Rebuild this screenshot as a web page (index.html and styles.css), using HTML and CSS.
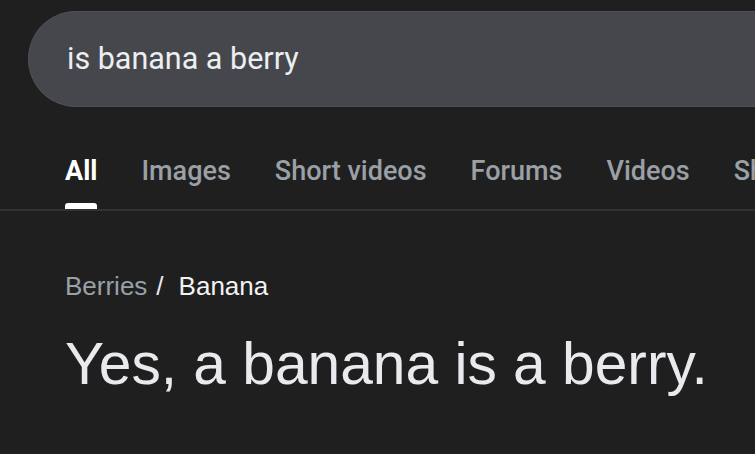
FILE: index.html
```html
<!DOCTYPE html>
<html lang="en">
<head>
<meta charset="utf-8">
<title>is banana a berry</title>
<link rel="stylesheet" href="styles.css">
</head>
<body>
<header class="top">
  <div class="search">
    <span class="query">is banana a berry</span>
  </div>
</header>
<nav class="tabs">
  <a class="tab active"><span class="label">All</span><span class="bar"></span></a>
  <a class="tab"><span class="label">Images</span><span class="bar"></span></a>
  <a class="tab"><span class="label">Short videos</span><span class="bar"></span></a>
  <a class="tab"><span class="label">Forums</span><span class="bar"></span></a>
  <a class="tab"><span class="label">Videos</span><span class="bar"></span></a>
  <a class="tab"><span class="label">Shopping</span><span class="bar"></span></a>
</nav>
<main class="content">
  <div class="crumbs"><span class="crumb-parent">Berries</span><span class="sep">/</span><span class="crumb-current">Banana</span></div>
  <h1 class="answer">Yes, a banana is a berry.</h1>
</main>
</body>
</html>
```
FILE: styles.css
```css
html, body {
  margin: 0;
  padding: 0;
  background: #1f1f1f;
  overflow: hidden;
  width: 755px;
  height: 454px;
}
.top {
  padding: 11px 0 0 28px;
}
.search {
  box-sizing: border-box;
  height: 96px;
  width: 800px;
  background: #45474c;
  border: 1px solid #505257;
  border-right: none;
  border-radius: 48px 0 0 48px;
  display: flex;
  align-items: center;
  padding-left: 38px;
}
.query {
  font-family: Roboto, "Liberation Sans", sans-serif;
  font-size: 30.5px;
  color: #eceef0;
  line-height: 36px;
}
.tabs {
  display: flex;
  gap: 44px;
  padding: 48px 0 0 65px;
  border-bottom: 2px solid #303134;
  white-space: nowrap;
  overflow: hidden;
}
.tab {
  display: flex;
  flex-direction: column;
  align-items: stretch;
  font-family: Roboto, "Liberation Sans", sans-serif;
  font-weight: 500;
  font-size: 27px;
  line-height: 32px;
  color: #9aa0a6;
  flex: none;
}
.tab .bar {
  height: 6px;
  margin-top: 16px;
  border-radius: 3px 3px 0 0;
  background: transparent;
}
.tab.active {
  color: #ffffff;
  font-weight: 700;
}
.tab.active .bar {
  background: #ffffff;
}
.content {
  padding: 60px 0 0 65px;
}
.crumbs {
  font-family: "Liberation Sans", Arial, sans-serif;
  font-size: 26px;
  line-height: 30px;
  color: #f1f3f4;
}
.crumb-parent {
  color: #9aa0a6;
}
.sep {
  margin: 0 15px 0 9px;
  color: #e8eaed;
}
.answer {
  margin: 30px 0 0;
  font-family: "Liberation Sans", Arial, sans-serif;
  font-weight: 400;
  font-size: 58.7px;
  line-height: 66px;
  color: #e8eaed;
  white-space: nowrap;
}
```
